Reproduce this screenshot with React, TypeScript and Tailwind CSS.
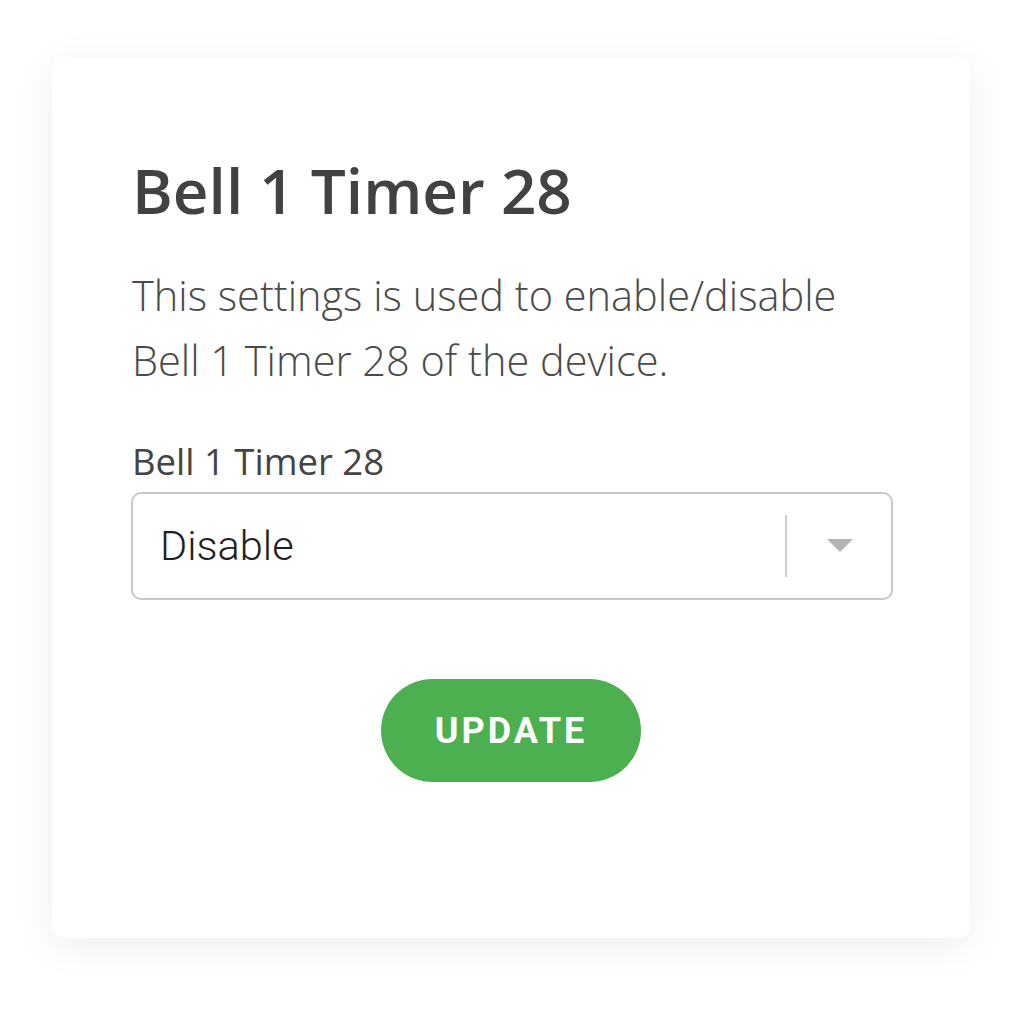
export default function App() {
  return (
    <div className="min-h-screen w-full bg-white pt-[57px] pl-[52px]">
      <div className="w-[918px] h-[881px] rounded-[12px] bg-white shadow-[0_8px_40px_rgba(0,0,0,0.07)] px-[80px] pt-[92px] box-border">
        <h1
          className="text-[62px] leading-[82px] font-semibold text-[#424242]"
          style={{ fontFamily: '"Open Sans", sans-serif' }}
        >
          Bell 1 Timer 28
        </h1>
        <p
          className="mt-[32px] text-[41.5px] leading-[65px] font-light text-[#4a4a4a]"
          style={{ fontFamily: '"Open Sans", sans-serif' }}
        >
          This settings is used to enable/disable
          <br />
          Bell 1 Timer 28 of the device.
        </p>
        <div className="mt-[46px] flex flex-col">
          <label
            className="text-[36.5px] leading-[44px] text-[#444444]"
            style={{ fontFamily: '"Open Sans", sans-serif' }}
          >
            Bell 1 Timer 28
          </label>
          <div className="mt-[9px] h-[108px] w-[762px] -ml-[1px] rounded-[10px] border-2 border-[#c8c8c8] flex items-center pl-[27px] pr-[38px] box-border">
            <span
              className="flex-1 text-[41.5px] font-light text-[#1f1f1f]"
              style={{ fontFamily: 'Roboto, sans-serif' }}
            >
              Disable
            </span>
            <div className="w-[2px] h-[62px] bg-[#cccccc]" />
            <svg width="26" height="14" viewBox="0 0 26 14" className="ml-[40px]">
              <path d="M0 0 L26 0 L13 13 Z" fill="#b3b3b3" />
            </svg>
          </div>
        </div>
        <div className="mt-[79px] flex justify-center">
          <button
            className="w-[260px] h-[103px] rounded-full bg-[#4caf50] text-white text-[36px] font-bold tracking-[3px]"
            style={{ fontFamily: 'Roboto, sans-serif' }}
          >
            UPDATE
          </button>
        </div>
      </div>
    </div>
  );
}
